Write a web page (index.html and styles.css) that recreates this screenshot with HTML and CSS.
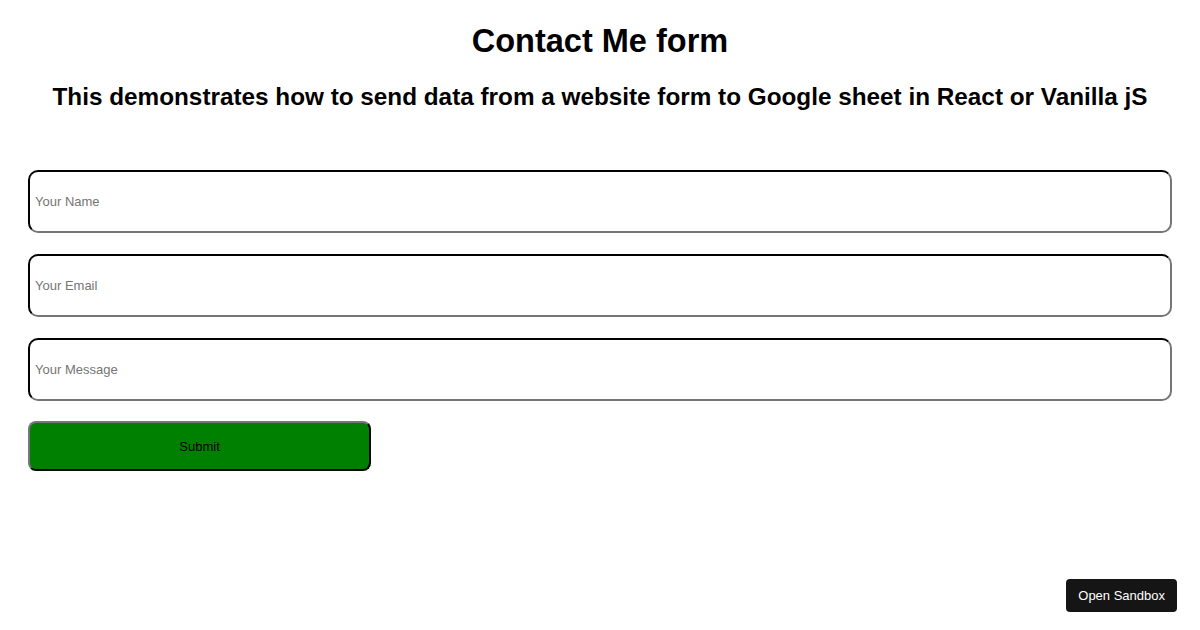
FILE: index.html
```html
<!DOCTYPE html>
<html lang="en">
<head>
    <meta charset="UTF-8">
    <title>Contact Me form</title>
    <link rel="stylesheet" href="styles.css">
</head>
<body>
    <div class="app">
        <h1>Contact Me form</h1>
        <h2>This demonstrates how to send data from a website form to Google sheet in React or Vanilla jS</h2>

        <form class="contact-form">
            <input type="text" name="name" placeholder="Your Name">
            <input type="email" name="email" placeholder="Your Email">
            <input type="text" name="message" placeholder="Your Message">
            <button type="button" class="submit">Submit</button>
        </form>
    </div>

    <a class="sandbox-btn">Open Sandbox</a>
</body>
</html>
```

FILE: styles.css
```css
body {margin: 0; font-family: "Liberation Sans", Arial, sans-serif; color: #000; background: #fff}
.app {text-align: center; padding-top: 0.1px}
h1 {font-size: 32.5px; margin: 23px 0 21px}
h2 {font-size: 24.3px; margin: 23px 0 20px}
.contact-form {display: flex; flex-direction: column; align-items: flex-start; gap: 21px; padding: 0 28px; margin-top: 59px}
.contact-form input {box-sizing: border-box; width: 100%; height: 63px; padding: 0 5px; font: 13px "Liberation Sans", Arial, sans-serif;
        border: 2px inset #767676; border-top-color: #1a1a1a; border-left-color: #1a1a1a; border-radius: 10px; outline: none}
.contact-form input::placeholder {color: #757575}
.submit {box-sizing: border-box; width: 30%; height: 50px; margin-top: -1px; background: #008000; color: #000; font: 13px "Liberation Sans", Arial, sans-serif;
        border: 2px outset #767676; border-bottom-color: #1a1a1a; border-right-color: #1a1a1a; border-radius: 8px; cursor: pointer}
.sandbox-btn {position: fixed; right: 23px; bottom: 18px; background: #151515; color: #fff; font: 13px "Liberation Sans", Arial, sans-serif;
        padding: 9px 12px; border-radius: 4px; text-decoration: none}
```
